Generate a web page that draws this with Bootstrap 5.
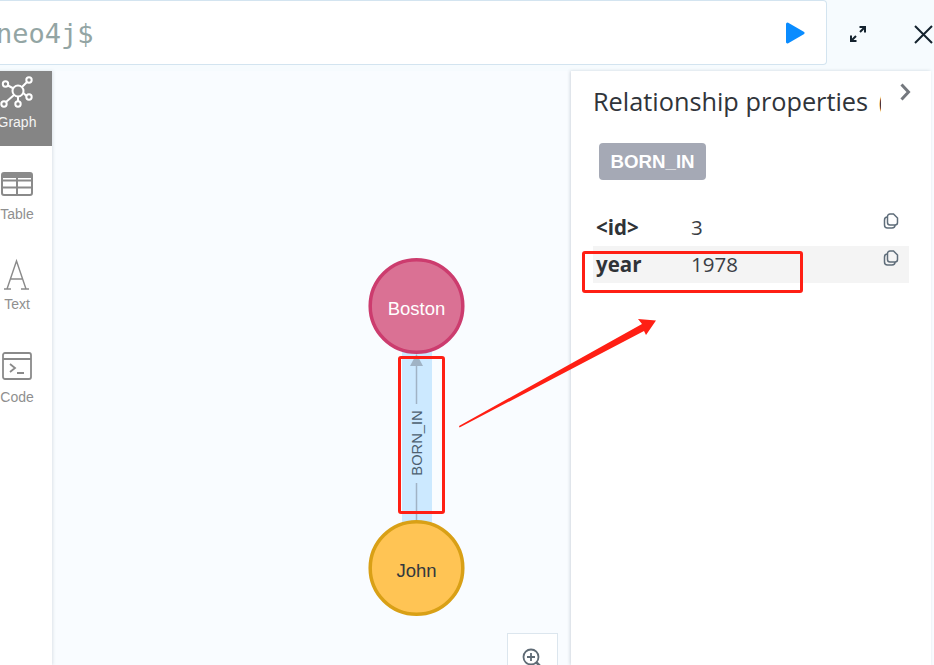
<!DOCTYPE html>
<html lang="en">
<head>
  <meta charset="UTF-8" />
  <meta name="viewport" content="width=device-width, initial-scale=1.0"/>
  <title>Neo4j Browser</title>
  <link href="https://cdn.jsdelivr.net/npm/bootstrap@5.3.0/dist/css/bootstrap.min.css" rel="stylesheet">
  <style>
    html, body { height: 100%; overflow: hidden; }
    body { background: #f9fcff; font-family: "Liberation Sans", Arial, sans-serif; color: #2f3337; }
    /* the frame is scrolled 18px to the right in the reference */
    .frame { width: 952px; height: 665px; margin-left: -18px; }
    .cmd-bar { height: 71px; background: #f6fbfe; }
    .cmd-box { width: 845px; height: 65px; background: #fff; border: 1px solid #d3e4f0; border-left: 0; border-radius: 0 4px 4px 0; padding: 0 21px 0 14px; }
    .prompt { font-family: "DejaVu Sans Mono", monospace; font-size: 27px; color: #93a5a4; margin-top: 3px; }
    .expand-icon { margin: 25px 0 0 22px; }
    .close-icon { margin: 25px 0 0 47px; }
    .work { height: 594px; }
    .side-nav { width: 70px; background: #fff; box-shadow: 1px 0 3px rgba(90,110,130,.18); z-index: 1; }
    .side-item { height: 75px; margin-bottom: 17px; color: #8f8f8f; font-size: 14px; line-height: 18px; padding-top: 2px; }
    .side-item svg { display: block; height: 36px; margin-bottom: 4px; }
    .side-item.active { background: #858585; color: #f4f4f4; padding-top: 4px; }
    .side-item.active svg { margin-bottom: 2px; }
    .side-item.tight svg { margin-bottom: 2px; }
    .side-item.lifted svg { margin-top: -1px; }
    .stage { width: 519px; }
    .stage svg { position: absolute; left: 0; top: 0; }
    .zoom-btn { position: absolute; left: 455px; top: 562px; width: 51px; height: 50px; background: #fff; border: 1px solid #dce6ee; }
    .zoom-btn svg { left: 13px; top: 13px; }
    .detail { width: 360px; background: #fff; box-shadow: -1px 0 3px rgba(90,110,130,.25); z-index: 1; padding: 13px 22px 0 22px; font-family: "Open Sans", sans-serif; }
    .detail-title { font-size: 25.3px; line-height: 34px; width: 288px; overflow: hidden; white-space: nowrap; color: #30343a; }
    .title-rest { margin-left: 4px; }
    .chevron { position: absolute; left: 328px; top: 12px; }
    .rel-pill { display: inline-block; background: #a5a9b5; color: #fff; font-family: "Liberation Sans", sans-serif; font-weight: 700; font-size: 18.7px; line-height: 37px; padding: 0 11.5px; border-radius: 4px; margin: 25px 0 29px 6px; }
    .prop-row { width: 316px; height: 37px; font-size: 20.5px; line-height: 37px; padding-left: 3px; }
    .prop-row.alt { background: #f4f4f4; }
    .prop-key { width: 95px; font-weight: 700; }
    .prop-val { flex: 1; color: #3a3e44; }
    .prop-copy { margin: 4px 10px 0 0; display: block; }
    .marks { position: absolute; left: 0; top: 0; z-index: 5; pointer-events: none; }
  </style>
</head>
<body>

  <div class="frame position-relative">
    <!-- query bar -->
    <div class="cmd-bar d-flex">
      <div class="cmd-box d-flex align-items-center justify-content-between">
        <span class="prompt">neo4j$</span>
        <svg width="20" height="24" viewBox="0 0 20 24"><path d="M2.5 3 L18 12 L2.5 21 Z" fill="#0a8cff" stroke="#0a8cff" stroke-width="3" stroke-linejoin="round"/></svg>
      </div>
      <svg class="expand-icon align-self-start" width="18" height="18" viewBox="0 0 18 18" fill="none" stroke="#14222e" stroke-width="2"><path d="M2 16 L7 11M11 7 L16 2M2 10.5V16H7.5M10.5 2H16V7.5"/></svg>
      <svg class="close-icon align-self-start" width="19" height="19" viewBox="0 0 19 19" fill="none" stroke="#14222e" stroke-width="2"><path d="M1 1 L18 18M18 1 L1 18"/></svg>
    </div>

    <div class="work d-flex">
      <!-- view switcher -->
      <nav class="side-nav flex-shrink-0 text-center">
        <div class="side-item active">
          <svg class="mx-auto" width="36" height="36" viewBox="0 0 36 36" fill="none" stroke="#fff" stroke-width="2">
            <circle cx="19" cy="16" r="5.500"/><circle cx="6.500" cy="9" r="2.700"/><circle cx="30" cy="5" r="2.700"/><circle cx="30" cy="22" r="2.700"/><circle cx="19" cy="29" r="2.700"/><circle cx="5" cy="29" r="2.700"/>
            <path d="M9 10.500 L14.500 13.500M23 12 L28 7M24.300 18 L27.500 21M19 21.500 V26.300M15 20 L7 27"/>
          </svg>
          Graph
        </div>
        <div class="side-item">
          <svg class="mx-auto" width="32" height="36" viewBox="0 0 32 36" fill="none" stroke="#8a8a8a" stroke-width="2"><rect x="1" y="8" width="30" height="22" rx="2"/><path d="M1 15.500H31M1 22.500H31M16 8V30"/><path d="M1 8H31V13H1Z" fill="#8a8a8a" stroke="none"/></svg>
          Table
        </div>
        <div class="side-item tight">
          <svg class="mx-auto" width="28" height="36" viewBox="0 0 28 36" fill="none" stroke="#8a8a8a" stroke-width="1.400"><path d="M1 32 H8M18 32 H26M4 32 L13.500 4 L23 32M7 22 H20"/></svg>
          Text
        </div>
        <div class="side-item lifted">
          <svg class="mx-auto" width="30" height="36" viewBox="0 0 30 36" fill="none" stroke="#8a8a8a" stroke-width="1.800"><rect x="1" y="5" width="28" height="26" rx="2"/><path d="M1 11H29M8 16 L13 20 L8 24M15 25H22"/></svg>
          Code
        </div>
      </nav>

      <!-- graph -->
      <div class="stage position-relative flex-shrink-0">
        <svg width="519" height="594" viewBox="52 71 519 594">
          <rect x="402" y="340" width="30" height="190" fill="#cce9ff"/>
          <path d="M416.500 366V404M416.500 483V522" stroke="#a0b3c5" stroke-width="1.500"/>
          <path d="M416.500 354 L423 366 H410 Z" fill="#a0b3c5"/>
          <text transform="translate(421.500 443) rotate(-90)" text-anchor="middle" font-family="Liberation Sans" font-size="14.700" fill="#4d6070">BORN_IN</text>
          <circle cx="416.500" cy="306" r="46.300" fill="#da7194" stroke="#cc3c6e" stroke-width="3.500"/>
          <text x="416.500" y="315" text-anchor="middle" font-family="Liberation Sans" font-size="18.500" fill="#fff">Boston</text>
          <circle cx="416.500" cy="568" r="46.300" fill="#ffc454" stroke="#d9a016" stroke-width="3.500"/>
          <text x="416.500" y="577" text-anchor="middle" font-family="Liberation Sans" font-size="18.500" fill="#33383e">John</text>
        </svg>
        <div class="zoom-btn">
          <svg width="24" height="24" viewBox="0 0 24 24" fill="none" stroke="#5f6b75" stroke-width="1.800"><circle cx="10" cy="10" r="7.500"/><path d="M10 6V14M6 10H14"/><path d="M15.500 15.500 L21 21" stroke-width="2.500"/></svg>
        </div>
      </div>

      <!-- details -->
      <aside class="detail position-relative flex-shrink-0">
        <div class="detail-title">Relationship properties <span class="title-rest">(3</span></div>
        <svg class="chevron" width="14" height="18" viewBox="0 0 14 18" fill="none" stroke="#74787e" stroke-width="3"><path d="M2.500 1.500 L9.500 9 L2.500 16.500"/></svg>
        <span class="rel-pill">BORN_IN</span>
        <div class="prop-row d-flex">
          <div class="prop-key">&lt;id&gt;</div>
          <div class="prop-val">3</div>
          <svg class="prop-copy" width="16" height="16" viewBox="0 0 16 16" fill="none" stroke="#5f6d7a" stroke-width="1.500"><path d="M4.500 3.500 A2.500 2.500 0 0 1 7 1 H10.500 L14.500 5 V9.500 A2.500 2.500 0 0 1 12 12 H7 A2.500 2.500 0 0 1 4.500 9.500 Z"/><path d="M4.500 4 A3 3 0 0 0 1.500 7 V12 A3 3 0 0 0 4.500 15 H9 A3 3 0 0 0 12 12"/></svg>
        </div>
        <div class="prop-row alt d-flex">
          <div class="prop-key">year</div>
          <div class="prop-val">1978</div>
          <svg class="prop-copy" width="16" height="16" viewBox="0 0 16 16" fill="none" stroke="#5f6d7a" stroke-width="1.500"><path d="M4.500 3.500 A2.500 2.500 0 0 1 7 1 H10.500 L14.500 5 V9.500 A2.500 2.500 0 0 1 12 12 H7 A2.500 2.500 0 0 1 4.500 9.500 Z"/><path d="M4.500 4 A3 3 0 0 0 1.500 7 V12 A3 3 0 0 0 4.500 15 H9 A3 3 0 0 0 12 12"/></svg>
        </div>
      </aside>
    </div>

    <!-- red annotations drawn over the screenshot -->
    <svg class="marks" width="952" height="665" viewBox="-18 0 952 665" fill="none">
      <rect x="399.500" y="357.500" width="44" height="155" rx="1.500" stroke="#ff1f14" stroke-width="3"/>
      <rect x="583.500" y="252.500" width="218" height="39" rx="1.500" stroke="#ff1f14" stroke-width="3"/>
      <path d="M459 426 L642 324 L638 319 L656 320.500 L646 335 L644 331 L459.500 427.500 Z" fill="#ff1f14"/>
    </svg>
  </div>

</body>
</html>
